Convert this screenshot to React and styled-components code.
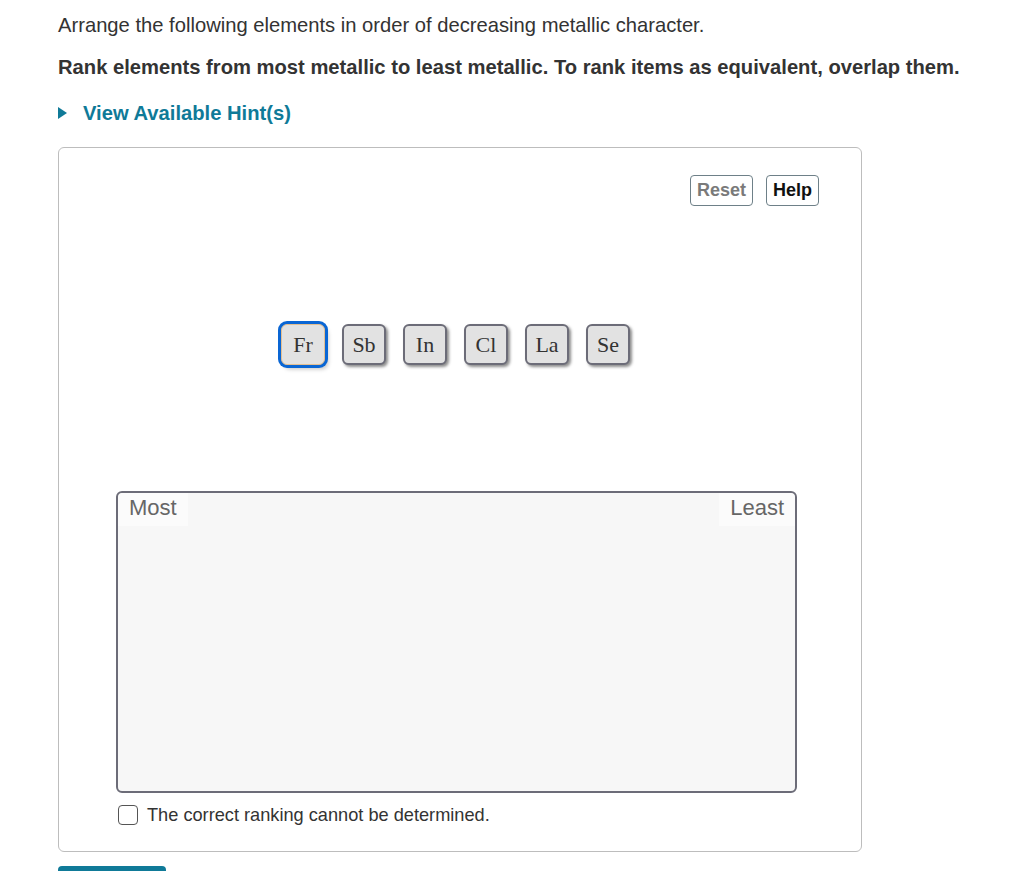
import React from "react";
import styled, { createGlobalStyle } from "styled-components";

const Global = createGlobalStyle`
  html, body { margin: 0; padding: 0; background: #fff; }
  body { font-family: "Liberation Sans", Arial, Helvetica, sans-serif; color: #333; }
  * { box-sizing: border-box; }
`;

const Page = styled.div`
  width: 1024px;
  height: 871px;
  overflow: hidden;
  padding: 13px 0 0 58px;
`;

const Prompt = styled.p`
  margin: 0;
  font-size: 20.2px;
  line-height: 24px;
  color: #333;
  white-space: nowrap;
  font-weight: ${(p) => (p.$bold ? 700 : 400)};
  margin-bottom: ${(p) => p.$gap || 0}px;
`;

const Hint = styled.div`
  display: flex;
  align-items: center;
  gap: 16px;
  margin-top: 22px;
  color: #0f7a98;
  font-weight: 700;
  font-size: 20.2px;
  line-height: 24px;
`;

const Tri = styled.span`
  width: 0;
  height: 0;
  border-top: 6px solid transparent;
  border-bottom: 6px solid transparent;
  border-left: 9px solid #0f7a98;
`;

const Panel = styled.div`
  margin-top: 22px;
  width: 804px;
  height: 705px;
  border: 1.5px solid #bdbdbd;
  border-radius: 6px;
  display: flex;
  flex-direction: column;
  padding: 27px 42px 0 57px;
`;

const Toolbar = styled.div`
  display: flex;
  justify-content: flex-end;
  gap: 13px;
`;

const ToolButton = styled.button`
  height: 31px;
  padding: 0 6px;
  border: 1.5px solid #6e8088;
  border-radius: 4px;
  background: #fff;
  font-family: "Liberation Sans", Arial, sans-serif;
  font-weight: 700;
  font-size: 18px;
  color: ${(p) => (p.$muted ? "#7a7a7a" : "#111")};
`;

const Tiles = styled.div`
  display: flex;
  justify-content: center;
  gap: 17px;
  margin-top: 118px;
  padding-right: 24px;
`;

const Tile = styled.div`
  height: 41px;
  width: 44px;
  display: flex;
  align-items: center;
  justify-content: center;
  background: #e2e2e2;
  border: ${(p) => (p.$focus ? "1px solid #e3bf92" : "2px solid #6c6c78")};
  border-radius: 6px;
  box-shadow: ${(p) =>
    p.$focus
      ? "0 0 0 3px #0a66d4, 3px 4px 4px rgba(0,0,0,0.25)"
      : "2px 2px 3px rgba(0,0,0,0.45)"};
  font-family: "Liberation Serif", "Times New Roman", serif;
  font-size: 22px;
  color: #333;
`;

const RankBox = styled.div`
  margin-top: 126px;
  width: 681px;
  height: 302px;
  border: 2px solid #6c6c78;
  border-radius: 6px;
  background: #f7f7f7;
  display: flex;
  justify-content: space-between;
  align-items: flex-start;
`;

const RankLabel = styled.span`
  background: #fbfbfb;
  color: #666;
  font-size: 22px;
  line-height: 30px;
  padding: 0 11px 3px 11px;
  border-radius: ${(p) => (p.$right ? "0 5px 0 0" : "5px 0 0 0")};
`;

const CheckRow = styled.label`
  display: flex;
  align-items: center;
  gap: 9px;
  margin-top: 11px;
  margin-left: 2px;
  font-size: 18.2px;
  line-height: 22px;
  color: #333;
`;

const Box = styled.span`
  width: 20px;
  height: 20px;
  border: 1.5px solid #555;
  border-radius: 4px;
  background: #fff;
`;

const Bar = styled.div`
  margin-top: 14px;
  width: 108px;
  height: 8px;
  background: #0f7a98;
  border-radius: 4px 4px 0 0;
`;

const elements = ["Fr", "Sb", "In", "Cl", "La", "Se"];

export default function App() {
  return (
    <Page>
      <Global />
      <Prompt $gap={18}>
        Arrange the following elements in order of decreasing metallic character.
      </Prompt>
      <Prompt $bold>
        Rank elements from most metallic to least metallic. To rank items as equivalent, overlap them.
      </Prompt>
      <Hint>
        <Tri />
        View Available Hint(s)
      </Hint>
      <Panel>
        <Toolbar>
          <ToolButton $muted>Reset</ToolButton>
          <ToolButton>Help</ToolButton>
        </Toolbar>
        <Tiles>
          {elements.map((e, i) => (
            <Tile key={e} $focus={i === 0}>
              {e}
            </Tile>
          ))}
        </Tiles>
        <RankBox>
          <RankLabel>Most</RankLabel>
          <RankLabel $right>Least</RankLabel>
        </RankBox>
        <CheckRow>
          <Box />
          The correct ranking cannot be determined.
        </CheckRow>
      </Panel>
      <Bar />
    </Page>
  );
}
